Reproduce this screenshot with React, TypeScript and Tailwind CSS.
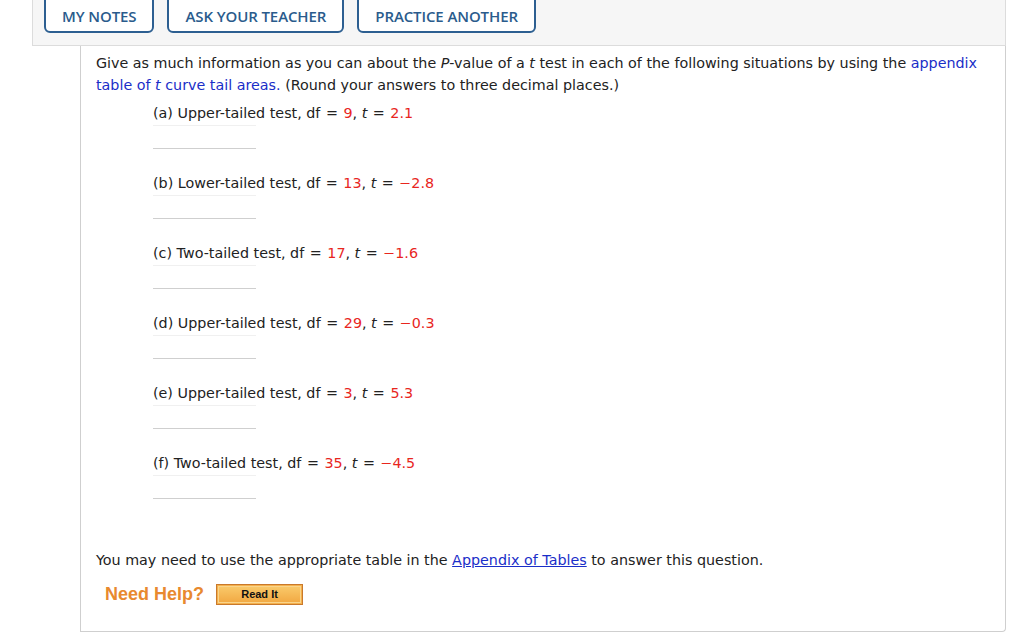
import React from 'react';

type Item = { label: string; kind: string; df: string; t: string };

const items: Item[] = [
  { label: '(a)', kind: 'Upper-tailed test', df: '9', t: '2.1' },
  { label: '(b)', kind: 'Lower-tailed test', df: '13', t: '\u22122.8' },
  { label: '(c)', kind: 'Two-tailed test', df: '17', t: '\u22121.6' },
  { label: '(d)', kind: 'Upper-tailed test', df: '29', t: '\u22120.3' },
  { label: '(e)', kind: 'Upper-tailed test', df: '3', t: '5.3' },
  { label: '(f)', kind: 'Two-tailed test', df: '35', t: '\u22124.5' },
];

function TopButton({ children }: { children: React.ReactNode }) {
  return (
    <button className="h-[42px] -mt-[9px] px-[16px] pt-[8px] border-2 border-[#2d5f91] rounded-b-[6px] bg-white text-[#2a5b8c] text-[15px] font-semibold font-['Open_Sans',sans-serif] tracking-[-0.1px]">
      {children}
    </button>
  );
}

function Question({ item }: { item: Item }) {
  return (
    <div className="pl-[57px]">
      <div className="leading-[22px]">
        {item.label} {item.kind}, df <span className="mx-[1px]">=</span>{' '}
        <span className="text-[#e8261e]">{item.df}</span>, <i>t</i> <span className="mx-[1px]">=</span>{' '}
        <span className="text-[#e8261e]">{item.t}</span>
      </div>
      <div className="mt-[1px] w-[103px] h-[24px] border-t border-[#f0f0f0] border-b border-b-[#cfcfcf]" />
    </div>
  );
}

export default function App() {
  return (
    <div className="w-[1024px] h-[640px] bg-white overflow-hidden font-['DejaVu_Sans',Verdana,sans-serif] text-[14.3px] text-[#222]">
      <div className="ml-[32px] mr-[18px] h-[46px] bg-[#f6f6f6] border border-t-0 border-[#dcdcdc] flex gap-[13px] pl-[11px]">
        <TopButton>MY NOTES</TopButton>
        <TopButton>ASK YOUR TEACHER</TopButton>
        <TopButton>PRACTICE ANOTHER</TopButton>
      </div>
      <div className="ml-[80px] mr-[18px] h-[586px] border-l border-r border-b border-[#cfcfcf] rounded-br-[4px] pl-[15px] pt-[6px]">
        <p className="leading-[22px]">
          Give as much information as you can about the <i>P</i>-value of a <i>t</i> test in each of the following
          situations by using the <span className="text-[#1a2ec8]">appendix table of <i>t</i> curve tail areas.</span>{' '}
          (Round your answers to three decimal places.)
        </p>
        <div className="mt-[6px] flex flex-col gap-[23px]">
          {items.map((it) => (
            <Question key={it.label} item={it} />
          ))}
        </div>
        <p className="mt-[50px] leading-[22px]">
          You may need to use the appropriate table in the{' '}
          <span className="text-[#1a2ec8] underline">Appendix of Tables</span> to answer this question.
        </p>
        <div className="mt-[10px] ml-[9px] flex items-center gap-[12px]">
          <span className="font-['Liberation_Sans',Arial,sans-serif] font-bold text-[18px] text-[#e8892f]">
            Need Help?
          </span>
          <button className="w-[87px] h-[21px] border border-[#c9792c] bg-[#f4b04b] p-[1px]">
            <span className="flex items-center justify-center h-full border border-[#f9d48c] bg-gradient-to-b from-[#f9c868] to-[#f2aa44] font-['Liberation_Sans',Arial,sans-serif] font-bold text-[11px] text-[#111]">
              Read It
            </span>
          </button>
        </div>
      </div>
    </div>
  );
}
